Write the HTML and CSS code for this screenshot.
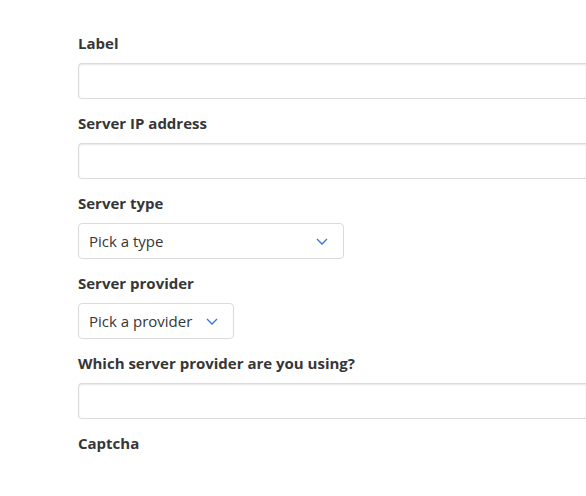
FILE: index.html
```html
<!DOCTYPE html>
<html lang="en">
<head>
<meta charset="utf-8">
<title>Server form</title>
<link rel="stylesheet" href="styles.css">
</head>
<body>
<form class="form">
  <div class="field">
    <label class="label" for="label">Label</label>
    <input class="input" id="label" type="text">
  </div>
  <div class="field">
    <label class="label" for="ip">Server IP address</label>
    <input class="input" id="ip" type="text">
  </div>
  <div class="field">
    <label class="label" for="type">Server type</label>
    <div class="select select-type">
      <select id="type"><option>Pick a type</option></select>
      <svg class="chevron" width="12" height="7" viewBox="0 0 12 7"><path d="M1 1l5 5 5-5" fill="none" stroke="#3273dc" stroke-width="1.3"/></svg>
    </div>
  </div>
  <div class="field">
    <label class="label" for="provider">Server provider</label>
    <div class="select select-provider">
      <select id="provider"><option>Pick a provider</option></select>
      <svg class="chevron" width="12" height="7" viewBox="0 0 12 7"><path d="M1 1l5 5 5-5" fill="none" stroke="#3273dc" stroke-width="1.3"/></svg>
    </div>
  </div>
  <div class="field">
    <label class="label" for="which">Which server provider are you using?</label>
    <input class="input" id="which" type="text">
  </div>
  <div class="field">
    <label class="label">Captcha</label>
  </div>
</form>
</body>
</html>
```

FILE: styles.css
```css
html, body {
  margin: 0;
  padding: 0;
  background: #fff;
  overflow: hidden;
}
body {
  font-family: "Open Sans", "Noto Sans", sans-serif;
  color: #363636;
}
.form {
  box-sizing: border-box;
  width: 100%;
  padding: 32px 0 0 78px;
}
.field {
  display: flex;
  flex-direction: column;
  align-items: flex-start;
  margin-bottom: 13px;
}
.label {
  font-size: 15px;
  font-weight: 700;
  line-height: 22px;
  color: #363636;
  margin-bottom: 9px;
}
.input {
  box-sizing: border-box;
  width: 100%;
  height: 36px;
  border: 1px solid #dbdbdb;
  border-right-width: 0;
  border-radius: 4px 0 0 4px;
  box-shadow: inset 0 1px 2px rgba(10,10,10,.1);
  font: inherit;
  padding: 0 10px;
  outline: none;
  background: #fff;
}
.select {
  position: relative;
  height: 36px;
}
.select select {
  appearance: none;
  -webkit-appearance: none;
  box-sizing: border-box;
  width: 100%;
  height: 36px;
  border: 1px solid #dbdbdb;
  border-radius: 4px;
  background: #fff;
  font-family: "Open Sans", "Noto Sans", sans-serif;
  font-size: 15px;
  color: #363636;
  padding: 0 30px 0 10px;
  outline: none;
}
.select-type { width: 266px; }
.select-provider { width: 156px; }
.chevron {
  position: absolute;
  right: 16px;
  top: 15px;
  pointer-events: none;
}
```
